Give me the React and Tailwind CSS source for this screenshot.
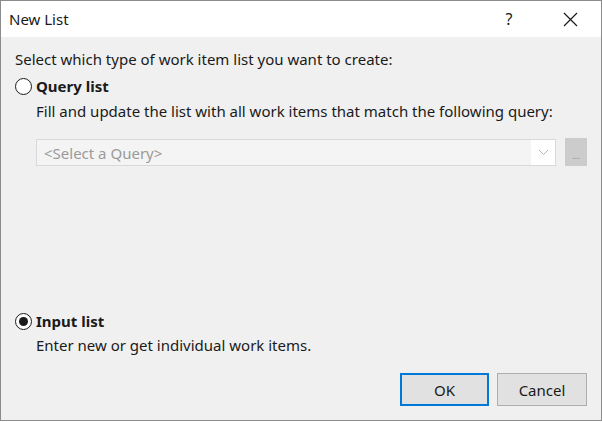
import React from 'react';

function Radio({ checked }) {
  return (
    <span className="w-[17px] h-[17px] rounded-full border-[1.5px] border-[#1a1a1a] bg-white flex items-center justify-center shrink-0">
      {checked && <span className="w-[9px] h-[9px] rounded-full bg-[#1a1a1a]" />}
    </span>
  );
}

export default function App() {
  return (
    <div
      className="w-[602px] h-[421px] border border-[#8c8c8c] bg-[#f0f0f0] flex flex-col text-[#1a1a1a] overflow-hidden"
      style={{ fontFamily: '"Noto Sans", "Open Sans", sans-serif' }}
    >
      {/* Title bar */}
      <div className="h-[36px] bg-white flex items-center shrink-0">
        <div className="pl-[8px] text-[15px] flex-1">New List</div>
        <div className="w-[46px] mr-[15px] text-center text-[16px]">?</div>
        <div className="w-[46px] mr-[8px] flex items-center justify-center">
          <svg width="15" height="15" viewBox="0 0 15 15">
            <path d="M1 1 L14 14 M14 1 L1 14" stroke="#1a1a1a" strokeWidth="1.2" fill="none" />
          </svg>
        </div>
      </div>

      {/* Body */}
      <div className="flex-1 flex flex-col px-[14px] pt-[12px] text-[15px] leading-[20px]">
        <p>Select which type of work item list you want to create:</p>

        <div className="flex items-center gap-[4px] mt-[7px]">
          <Radio />
          <span className="font-bold">Query list</span>
        </div>
        <p className="pl-[21px] mt-[5px]">Fill and update the list with all work items that match the following query:</p>

        <div className="flex items-stretch mt-[18px] pl-[21px] gap-[9px]">
          <div className="flex-1 h-[27px] border border-[#d9d9d9] bg-[#f4f4f4] flex items-center">
            <span className="flex-1 pl-[7px] text-[#9a9a9a]">&lt;Select a Query&gt;</span>
            <span className="w-[24px] self-stretch bg-white flex items-center justify-center">
              <svg width="11" height="7" viewBox="0 0 11 7">
                <path d="M1 1 L5.5 5.5 L10 1" stroke="#b4b4b4" strokeWidth="1" fill="none" />
              </svg>
            </span>
          </div>
          <div className="w-[22px] h-[28px] -mt-[1px] bg-[#cccccc] flex items-end justify-center pb-[6px]">
            <span className="text-[9px] leading-none text-[#8f8f8f]">...</span>
          </div>
        </div>

        <div className="flex-1" />

        <div className="flex items-center gap-[4px]">
          <Radio checked />
          <span className="font-bold">Input list</span>
        </div>
        <p className="pl-[21px] mt-[4px]">Enter new or get individual work items.</p>

        <div className="flex justify-end gap-[8px] mt-[18px] mb-[14px]">
          <button className="w-[89px] h-[33px] bg-[#e1e1e1] border-2 border-[#0078d7] text-[15px]">OK</button>
          <button className="w-[90px] h-[33px] bg-[#e1e1e1] border border-[#adadad] text-[15px]">Cancel</button>
        </div>
      </div>
    </div>
  );
}
